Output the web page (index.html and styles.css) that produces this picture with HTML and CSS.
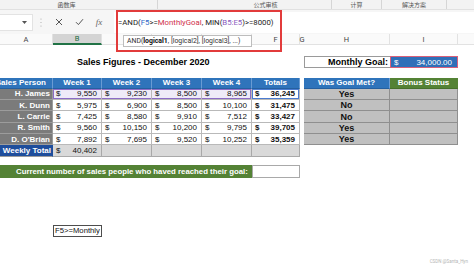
FILE: index.html
```html
<!DOCTYPE html>
<html lang="en">
<head>
    <meta charset="UTF-8">
    <meta name="viewport" content="width=device-width, initial-scale=1.0">
    <title>Sales Figures - December 2020</title>
    <link rel="stylesheet" href="styles.css">
</head>
<body>
<div class="app">
    <div class="ribbon">
        <div class="grp grp-fn">函数库</div>
        <div class="grp grp-audit">公式审核</div>
        <div class="grp grp-calc">计算</div>
        <div class="grp grp-sol">解决方案</div>
        <div class="grp grp-rest"></div>
    </div>

    <div class="fbar">
        <div class="namebox">
            <svg width="5" height="3" viewBox="0 0 5 3"><path d="M0 0 L5 0 L2.5 3 Z" fill="#555"/></svg>
        </div>
        <div class="grip">
            <svg width="2" height="9" viewBox="0 0 2 9"><circle cx="1" cy="1" r="0.6" fill="#aaa"/><circle cx="1" cy="4.5" r="0.6" fill="#aaa"/><circle cx="1" cy="8" r="0.6" fill="#aaa"/></svg>
        </div>
        <div class="fbtn">
            <svg width="8" height="8" viewBox="0 0 8 8"><path d="M1 1 L7 7 M7 1 L1 7" stroke="#555" stroke-width="1" fill="none"/></svg>
        </div>
        <div class="fbtn">
            <svg width="9" height="8" viewBox="0 0 9 8"><path d="M1 4.2 L3.4 6.6 L8 1.2" stroke="#555" stroke-width="1" fill="none"/></svg>
        </div>
        <div class="fbtn fx">fx</div>
        <div class="formula">=AND(<span class="ref-blue">F5</span>&gt;=<span class="ref-red">MonthlyGoal</span>, MIN(<span class="ref-purple">B5:E5</span>)&gt;=8000)</div>
    </div>

    <!-- C, D and E sit under the function tooltip -->
    <div class="cols colheads">
        <div>A</div><div class="sel">B</div><div></div><div></div><div></div><div>F</div><div class="narrow">G</div><div>H</div><div>I</div><div class="last"></div>
    </div>

    <div class="sheet">
        <div class="cols title-row">
            <div class="title">Sales Figures - December 2020</div>
            <div class="goal-label">Monthly Goal:</div>
            <div class="goal-value"><span>$</span><span>34,000.00</span></div>
        </div>

        <div class="cols trow">
            <div class="c hd first">Sales Person</div>
            <div class="c hd">Week 1</div>
            <div class="c hd">Week 2</div>
            <div class="c hd">Week 3</div>
            <div class="c hd">Week 4</div>
            <div class="c hd">Totals</div>
            <div></div>
            <div class="c hd">Was Goal Met?</div>
            <div class="c hd green">Bonus Status</div>
        </div>

        <div class="cols trow">
            <div class="c name">H. James</div>
            <div class="c amt pick pick-l"><span>$</span><span>9,550</span></div>
            <div class="c amt pick"><span>$</span><span>9,230</span></div>
            <div class="c amt pick"><span>$</span><span>8,500</span></div>
            <div class="c amt pick pick-r"><span>$</span><span>8,965</span></div>
            <div class="c amt tot ref"><span>$</span><span>36,245</span></div>
            <div></div>
            <div class="c met">Yes</div>
            <div class="c bonus"></div>
        </div>
        <div class="cols trow">
            <div class="c name">K. Dunn</div>
            <div class="c amt"><span>$</span><span>5,975</span></div>
            <div class="c amt"><span>$</span><span>6,900</span></div>
            <div class="c amt"><span>$</span><span>8,500</span></div>
            <div class="c amt"><span>$</span><span>10,100</span></div>
            <div class="c amt tot"><span>$</span><span>31,475</span></div>
            <div></div>
            <div class="c met">No</div>
            <div class="c bonus"></div>
        </div>
        <div class="cols trow">
            <div class="c name">L. Carrie</div>
            <div class="c amt"><span>$</span><span>7,425</span></div>
            <div class="c amt"><span>$</span><span>8,580</span></div>
            <div class="c amt"><span>$</span><span>9,910</span></div>
            <div class="c amt"><span>$</span><span>7,512</span></div>
            <div class="c amt tot"><span>$</span><span>33,427</span></div>
            <div></div>
            <div class="c met">No</div>
            <div class="c bonus"></div>
        </div>
        <div class="cols trow">
            <div class="c name">R. Smith</div>
            <div class="c amt"><span>$</span><span>9,560</span></div>
            <div class="c amt"><span>$</span><span>10,150</span></div>
            <div class="c amt"><span>$</span><span>10,200</span></div>
            <div class="c amt"><span>$</span><span>9,795</span></div>
            <div class="c amt tot"><span>$</span><span>39,705</span></div>
            <div></div>
            <div class="c met">Yes</div>
            <div class="c bonus"></div>
        </div>
        <div class="cols trow">
            <div class="c name">D. O'Brian</div>
            <div class="c amt"><span>$</span><span>7,892</span></div>
            <div class="c amt"><span>$</span><span>7,695</span></div>
            <div class="c amt"><span>$</span><span>9,520</span></div>
            <div class="c amt"><span>$</span><span>10,252</span></div>
            <div class="c amt tot"><span>$</span><span>35,359</span></div>
            <div></div>
            <div class="c met">Yes</div>
            <div class="c bonus"></div>
        </div>
        <div class="cols trow">
            <div class="c name total-name">Weekly Total</div>
            <div class="c amt sum"><span>$</span><span>40,402</span></div>
            <div class="c sum"></div>
            <div class="c sum"></div>
            <div class="c sum"></div>
            <div class="c sum"></div>
        </div>

        <div class="cols banner-row">
            <div class="banner">Current number of sales people who haved reached their goal:</div>
            <div class="answer"></div>
        </div>
    </div>

    <div class="edit-frame"></div>
    <div class="tip">AND(<b>logical1</b>, [logical2], [logical3], ...)</div>
    <div class="cell-edit">F5&gt;=Monthly</div>
    <div class="mark">CSDN @Santa_Hyn</div>
</div>
</body>
</html>
```

FILE: styles.css
```css
body {
    margin: 0;
    background: #ffffff;
    font-family: "Liberation Sans", Arial, sans-serif;
}
.app {
    position: relative;
    width: 474px;
    height: 267px;
    overflow: hidden;
    background: #ffffff;
}

/* ribbon group labels */
.ribbon {
    display: flex;
    height: 10px;
    background: #f3f3f3;
    border-bottom: 1px solid #e1e1e1;
    box-sizing: border-box;
    font-family: "Noto Sans CJK SC", sans-serif;
    font-size: 6px;
    color: #555;
}
.grp {
    display: flex;
    align-items: center;
    justify-content: center;
    border-right: 1px solid #d6d6d6;
    box-sizing: border-box;
    line-height: 1;
}
.grp-fn { width: 158px; padding-right: 24px; }
.grp-audit { width: 174px; padding-left: 42px; }
.grp-calc { width: 50px; }
.grp-sol { width: 65px; }
.grp-rest { flex: 1; border-right: none; }

/* formula bar */
.fbar {
    display: flex;
    align-items: center;
    height: 24px;
    background: #f6f6f6;
    font-family: Roboto, sans-serif;
}
.namebox {
    width: 33px;
    height: 17px;
    background: #ffffff;
    border: 1px solid #e3e3e3;
    border-left: none;
    box-sizing: border-box;
    display: flex;
    align-items: center;
    justify-content: flex-end;
    padding-right: 5px;
}
.grip {
    width: 16px;
    display: flex;
    justify-content: center;
}
.fbtn {
    width: 20px;
    display: flex;
    justify-content: center;
    align-items: center;
}
.fx {
    font-family: "Liberation Serif", serif;
    font-style: italic;
    font-size: 9px;
    color: #666;
}
.formula {
    flex: 1;
    height: 21px;
    margin-left: 5px;
    padding-left: 4px;
    background: #ffffff;
    display: flex;
    align-items: center;
    font-size: 7.8px;
    color: #222;
    white-space: nowrap;
}
.ref-blue { color: #2e68c8; }
.ref-red { color: #d0314b; }
.ref-purple { color: #8a5bbd; }

/* shared column grid */
.cols {
    display: grid;
    grid-template-columns: 53px 49px 50px 50px 50px 48px 4px 86px 68px 1fr;
}

.colheads {
    height: 11px;
    background: #fafafa;
    border-bottom: 1px solid #e2e2e2;
    box-sizing: border-box;
    font-family: Roboto, sans-serif;
    font-size: 7.5px;
    color: #444;
}
.colheads div {
    display: flex;
    align-items: center;
    justify-content: center;
    border-right: 1px solid #e2e2e2;
    white-space: nowrap;
}
.colheads .narrow { overflow: visible; border-right: none; }
.colheads .last { border-right: none; }
.colheads .sel {
    background: #d4d4d4;
    border-bottom: 2px solid #217346;
    color: #1e6b41;
}

/* sheet */
.sheet {
    padding-top: 11px;
}
.title-row {
    height: 11px;
    font-weight: bold;
    font-size: 9px;
}
.title {
    grid-column: 1 / 8;
    padding-left: 77px;
    display: flex;
    align-items: center;
    white-space: nowrap;
}
.goal-label {
    display: flex;
    align-items: center;
    justify-content: flex-end;
    padding-right: 2px;
    border: 1px solid #9a9a9a;
    border-right: none;
}
.goal-value {
    display: flex;
    align-items: center;
    justify-content: space-between;
    padding: 0 5px 0 3px;
    background: #2f6fb8;
    color: #ffffff;
    font-weight: normal;
    font-size: 8px;
    border: 1px solid #d9607a;
}

.trow {
    height: 11.3px;
    font-size: 8px;
}
.title-row + .trow { margin-top: 10.5px; }

.c {
    display: flex;
    align-items: center;
    box-sizing: border-box;
    white-space: nowrap;
    overflow: hidden;
    border-right: 1px solid #b9b9b9;
    border-bottom: 1px solid #b9b9b9;
}
.hd {
    background: #2f74bb;
    color: #ffffff;
    font-weight: bold;
    justify-content: center;
    border-right-color: #6a9bd3;
    border-bottom-color: #25609f;
}
.hd.first {
    justify-content: flex-end;
    padding-right: 6px;
}
.hd.green {
    background: #548235;
    border-right-color: #548235;
    border-bottom-color: #46702b;
}
.name {
    background: #7b7b7b;
    color: #ffffff;
    font-weight: bold;
    justify-content: flex-end;
    padding-right: 2px;
    border-right-color: #9c9c9c;
    border-bottom-color: #9c9c9c;
}
.total-name {
    background: #1f4e9c;
    padding-right: 1px;
    border-right-color: #1f4e9c;
}
.amt {
    justify-content: space-between;
    padding: 0 4px 0 3px;
    color: #111;
}
.tot { font-weight: bold; }
.pick {
    background: #efebf8;
    box-shadow: inset 0 1px #8c6cc6, inset 0 -1px #8c6cc6;
}
.pick-l { box-shadow: inset 0 1px #8c6cc6, inset 0 -1px #8c6cc6, inset 1px 0 #8c6cc6; }
.pick-r { box-shadow: inset 0 1px #8c6cc6, inset 0 -1px #8c6cc6, inset -1px 0 #8c6cc6; }
.ref { box-shadow: inset 0 0 0 1px #4b7bd0; }
.sum {
    background: #d9d9d9;
    border-right-color: #a9a9a9;
    border-bottom-color: #a9a9a9;
}
.met {
    background: #c0c0c0;
    justify-content: center;
    font-weight: bold;
    font-size: 9px;
    color: #111;
    border-right-color: #8f8f8f;
    border-bottom-color: #8f8f8f;
}
.bonus {
    background: #c0c0c0;
    border-right-color: #8f8f8f;
    border-bottom-color: #8f8f8f;
}

.banner-row {
    height: 13px;
    margin-top: 8.5px;
}
.banner {
    grid-column: 1 / 6;
    background: #548235;
    color: #ffffff;
    font-weight: bold;
    font-size: 7.8px;
    display: flex;
    align-items: center;
    padding-left: 16px;
    white-space: nowrap;
    overflow: hidden;
}
.answer {
    border: 1px solid #a9a9a9;
    background: #ffffff;
}

/* overlays */
.edit-frame {
    position: absolute;
    left: 116px;
    top: 10px;
    width: 166px;
    height: 42px;
    border: 2px solid #e23b3b;
    box-sizing: border-box;
}
.tip {
    position: absolute;
    left: 123px;
    top: 35px;
    width: 129px;
    height: 12px;
    box-sizing: border-box;
    border: 1px solid #bdbdbd;
    background: #ffffff;
    padding-left: 3px;
    font-family: Roboto, sans-serif;
    font-size: 6.9px;
    color: #333;
    line-height: 10px;
    white-space: nowrap;
}
.tip b { color: #111; }
.cell-edit {
    position: absolute;
    left: 53px;
    top: 225px;
    width: 49px;
    height: 12px;
    box-sizing: border-box;
    border: 1px solid #4d4d4d;
    background: #ffffff;
    font-size: 7.7px;
    line-height: 10px;
    padding-left: 1px;
    color: #111;
    white-space: nowrap;
}
.mark {
    position: absolute;
    right: 6px;
    bottom: 3px;
    font-family: Roboto, sans-serif;
    font-size: 4.5px;
    color: #b5b5b5;
}
```
